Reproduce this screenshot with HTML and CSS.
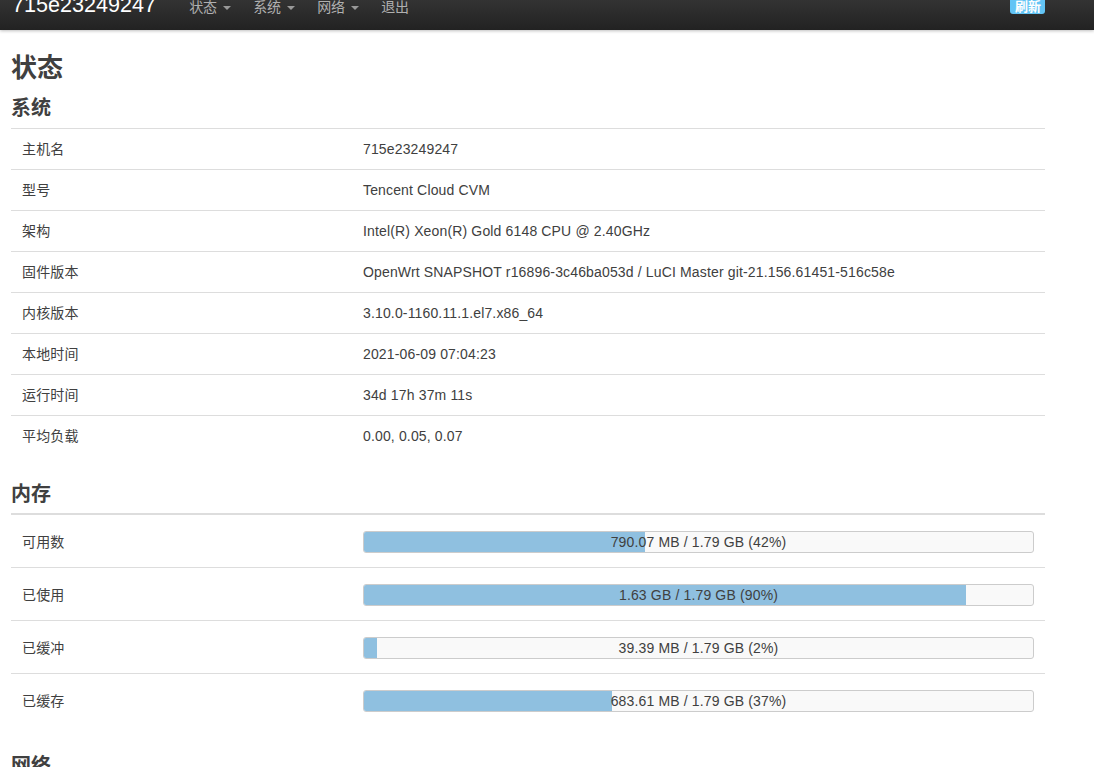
FILE: index.html
```html
<!DOCTYPE html>
<html lang="zh-CN">
<head>
<meta charset="utf-8">
<title>状态</title>
<link rel="stylesheet" href="styles.css">
</head>
<body>
<header class="topbar">
  <div class="topbar-inner">
    <span class="brand">715e23249247</span>
    <nav class="nav">
      <span class="nav-item">状态<i class="caret"></i></span>
      <span class="nav-item">系统<i class="caret"></i></span>
      <span class="nav-item">网络<i class="caret"></i></span>
      <span class="nav-item">退出</span>
    </nav>
    <span class="badge">刷新</span>
  </div>
</header>
<main class="container">
  <h2 class="page-title">状态</h2>
  <h3 class="section-title">系统</h3>
  <table class="info">
    <tr><td class="label">主机名</td><td>715e23249247</td></tr>
    <tr><td class="label">型号</td><td>Tencent Cloud CVM</td></tr>
    <tr><td class="label">架构</td><td>Intel(R) Xeon(R) Gold 6148 CPU @ 2.40GHz</td></tr>
    <tr><td class="label">固件版本</td><td>OpenWrt SNAPSHOT r16896-3c46ba053d / LuCI Master git-21.156.61451-516c58e</td></tr>
    <tr><td class="label">内核版本</td><td>3.10.0-1160.11.1.el7.x86_64</td></tr>
    <tr><td class="label">本地时间</td><td>2021-06-09 07:04:23</td></tr>
    <tr><td class="label">运行时间</td><td>34d 17h 37m 11s</td></tr>
    <tr><td class="label">平均负载</td><td>0.00, 0.05, 0.07</td></tr>
  </table>
  <h3 class="section-title ruled">内存</h3>
  <table class="mem">
    <tr><td class="label">可用数</td><td><div class="bar"><div class="fill" style="width:42%"></div><span class="bar-text">790.07 MB / 1.79 GB (42%)</span></div></td></tr>
    <tr><td class="label">已使用</td><td><div class="bar"><div class="fill" style="width:90%"></div><span class="bar-text">1.63 GB / 1.79 GB (90%)</span></div></td></tr>
    <tr><td class="label">已缓冲</td><td><div class="bar"><div class="fill" style="width:2%"></div><span class="bar-text">39.39 MB / 1.79 GB (2%)</span></div></td></tr>
    <tr><td class="label">已缓存</td><td><div class="bar"><div class="fill" style="width:37%"></div><span class="bar-text">683.61 MB / 1.79 GB (37%)</span></div></td></tr>
  </table>
  <h3 class="section-title net">网络</h3>
</main>
</body>
</html>
```
FILE: styles.css
```css
html, body {
  margin: 0;
  padding: 0;
  background: #fff;
  overflow: hidden;
}
body {
  font-family: "Liberation Sans", "Noto Sans CJK SC", sans-serif;
  font-size: 14px;
  letter-spacing: 0.15px;
  color: #404040;
}
.topbar {
  height: 30px;
  background: linear-gradient(#333333, #222222);
  box-shadow: 0 1px 3px rgba(0,0,0,0.25);
  overflow: hidden;
}
.topbar-inner {
  width: 1034px;
  margin-left: 11px;
  display: flex;
  align-items: flex-start;
}
.brand {
  font-size: 21.6px;
  line-height: 22px;
  letter-spacing: 0;
  color: #fff;
  margin-top: -6px;
  margin-left: 1px;
}
.nav {
  display: flex;
  margin-left: 33px;
}
.nav-item {
  font-size: 14px;
  line-height: 14px;
  letter-spacing: 0;
  color: #b0b0b0;
  margin-right: 22px;
  display: flex;
  align-items: center;
}
.caret {
  display: inline-block;
  width: 0;
  height: 0;
  border-left: 4px solid transparent;
  border-right: 4px solid transparent;
  border-top: 4px solid #999;
  margin-left: 6px;
  margin-top: 1px;
}
.badge {
  margin-left: auto;
  background: #62c4f5;
  color: #fff;
  font-weight: bold;
  font-size: 13px;
  line-height: 14px;
  letter-spacing: 0;
  height: 14px;
  padding: 0 4px 0 5px;
  border-radius: 0 0 3px 3px;
  overflow: hidden;
}
.container {
  width: 1034px;
  margin-left: 11px;
}
.page-title {
  font-size: 26px;
  line-height: 36px;
  font-weight: bold;
  letter-spacing: 0;
  margin: 20px 0 0 0;
}
.section-title {
  font-size: 20px;
  line-height: 24px;
  font-weight: bold;
  letter-spacing: 0;
  margin: 10px 0 8px 0;
}
.section-title.ruled {
  margin: 26px 0 0 0;
  padding-bottom: 7px;
  border-bottom: 2px solid #ddd;
}
.section-title.net {
  margin: 28px 0 0 0;
}
table {
  width: 100%;
  border-collapse: collapse;
}
td {
  padding: 11px;
  line-height: 18px;
  vertical-align: middle;
}
td.label {
  width: 319px;
}
.info tr td {
  border-top: 1px solid #ddd;
}
.mem td {
  padding-top: 16px;
  padding-bottom: 14px;
}
.mem tr + tr td {
  border-top: 1px solid #ddd;
}
.bar {
  position: relative;
  height: 20px;
  border: 1px solid #ccc;
  border-radius: 3px;
  background: #f9f9f9;
  overflow: hidden;
}
.fill {
  height: 100%;
  background: #8fc0e0;
}
.bar-text {
  position: absolute;
  left: 0;
  right: 0;
  top: 0;
  text-align: center;
  line-height: 20px;
  color: #404040;
}
```
